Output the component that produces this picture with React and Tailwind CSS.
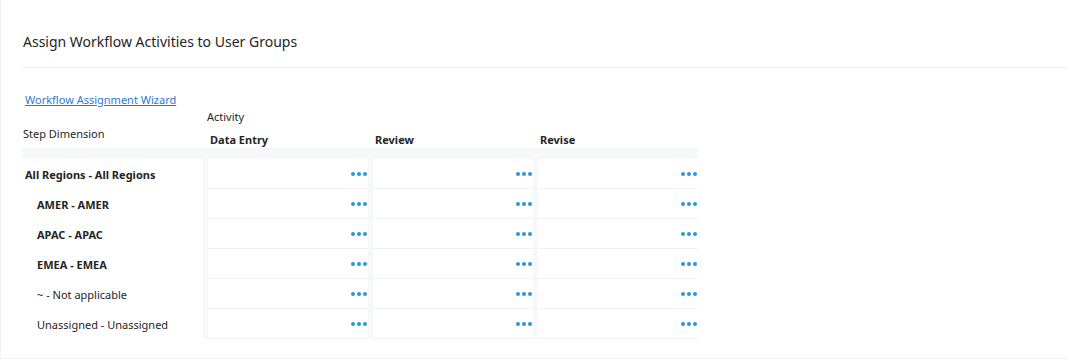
import React from 'react';

const rows = [
  { label: 'All Regions - All Regions', bold: true, indent: false },
  { label: 'AMER - AMER', bold: true, indent: true },
  { label: 'APAC - APAC', bold: true, indent: true },
  { label: 'EMEA - EMEA', bold: true, indent: true },
  { label: '~ - Not applicable', bold: false, indent: true },
  { label: 'Unassigned - Unassigned', bold: false, indent: true },
];

const activities = ['Data Entry', 'Review', 'Revise'];

function Dots() {
  return (
    <div className="flex items-center gap-[2px] pr-px">
      <span className="w-[4px] h-[4px] rounded-full bg-[#2c97d8]" />
      <span className="w-[4px] h-[4px] rounded-full bg-[#2c97d8]" />
      <span className="w-[4px] h-[4px] rounded-full bg-[#2c97d8]" />
    </div>
  );
}

export default function App() {
  return (
    <div className="w-[1067px] h-[359px] bg-white border-l border-b border-[#f1f2f4] text-[#252525] font-['Noto_Sans',sans-serif] text-[11px] leading-[16px] overflow-hidden">
      <div className="pl-[21px]">
        <div className="h-[68px] border-b border-[#eef0f2] flex items-center pt-[17px]">
          <h1 className="text-[14px] leading-[20px] pl-px">Assign Workflow Activities to User Groups</h1>
        </div>

        <div className="pt-[24px] h-[40px]">
          <a href="#" className="block w-fit text-[#2a7ad3] underline ml-[3px]">
            Workflow Assignment Wizard
          </a>
        </div>

        <div className="flex h-[40px]">
          <div className="w-[185px] pl-px pt-[18px]">Step Dimension</div>
          <div className="flex flex-col">
            <span className="pt-[1px]">Activity</span>
            <div className="flex mt-[7px]">
              {activities.map((a) => (
                <div key={a} className="w-[165px] pl-[3px] font-bold">
                  {a}
                </div>
              ))}
            </div>
          </div>
        </div>

        <div className="w-[676px] bg-[#f7f8fa] pt-[11px]">
          <div className="grid grid-cols-[181px_160px_160px_160px] gap-x-[5px]">
            <div className="bg-white flex flex-col">
              {rows.map((r) => (
                <div
                  key={r.label}
                  className={`h-[30px] flex items-center pt-px ${r.bold ? 'font-bold' : ''} ${r.indent ? 'pl-[15px]' : 'pl-[3px]'}`}
                >
                  {r.label}
                </div>
              ))}
            </div>
            {activities.map((a) => (
              <div key={a} className="bg-white flex flex-col">
                {rows.map((r) => (
                  <div key={r.label} className="h-[30px] border-b border-[#f1f2f4] flex items-center justify-end">
                    <Dots />
                  </div>
                ))}
              </div>
            ))}
          </div>
        </div>
      </div>
    </div>
  );
}
